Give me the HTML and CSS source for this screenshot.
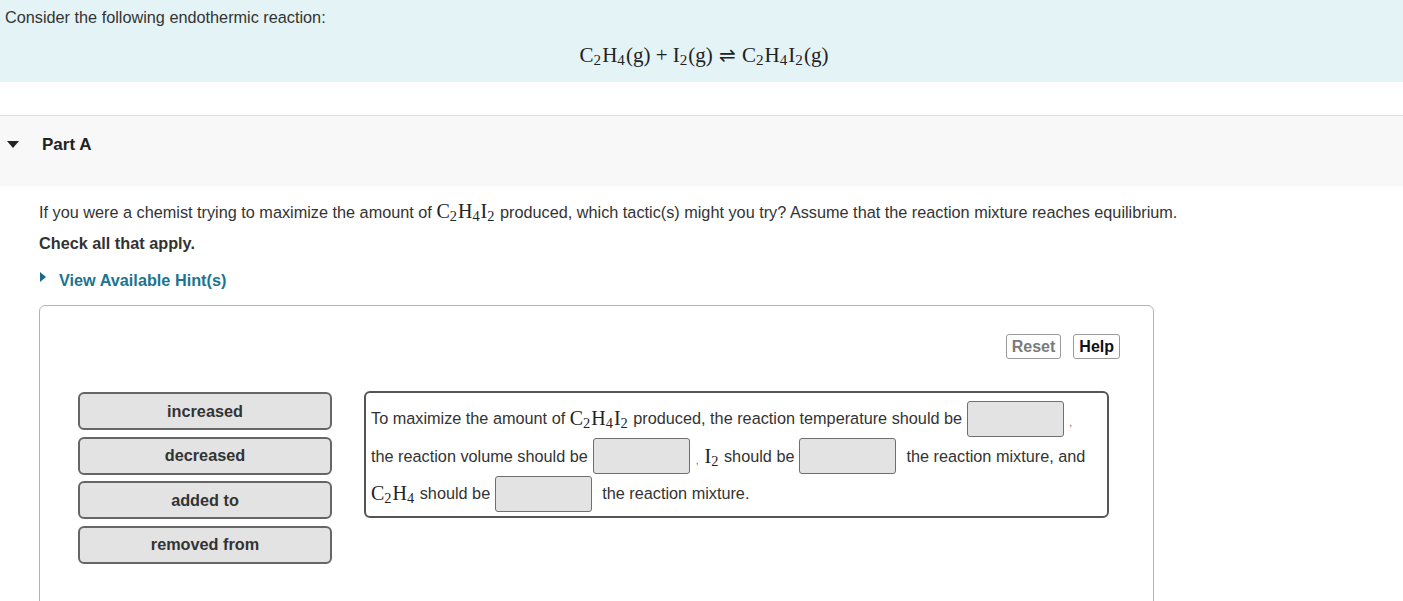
FILE: index.html
```html
<!DOCTYPE html>
<html>
<head>
<meta charset="utf-8">
<link rel="stylesheet" href="styles.css">
</head>
<body>
<div class="intro">
  <p class="intro-text">Consider the following endothermic reaction:</p>
  <div class="equation">
    <span class="chem">C<sub>2</sub>H<sub>4</sub>(g) + I<sub>2</sub>(g) <span class="harp">⇌</span> C<sub>2</sub>H<sub>4</sub>I<sub>2</sub>(g)</span>
  </div>
</div>
<div class="gap"></div>
<div class="part-header">
  <span class="tri-down"></span>
  <span class="part-title">Part A</span>
</div>
<div class="part-body">
  <p class="question">If you were a chemist trying to maximize the amount of <span class="chem">C<sub>2</sub>H<sub>4</sub>I<sub>2</sub></span> produced, which tactic(s) might you try? Assume that the reaction mixture reaches equilibrium.</p>
  <p class="check">Check all that apply.</p>
  <div class="hint"><span class="tri-right"></span><span class="hint-text">View Available Hint(s)</span></div>
  <div class="work">
    <div class="tools">
      <button class="btn btn-reset">Reset</button>
      <button class="btn btn-help">Help</button>
    </div>
    <div class="workrow">
      <div class="tiles">
        <div class="tile">increased</div>
        <div class="tile">decreased</div>
        <div class="tile">added to</div>
        <div class="tile">removed from</div>
      </div>
      <div class="sentence">
        <div class="line">
          <span>To maximize the amount of&nbsp;</span><span class="chem">C<sub>2</sub>H<sub>4</sub>I<sub>2</sub></span><span>&nbsp;produced, the reaction temperature should be</span>
          <span class="drop d1"></span><span class="comma c1">,</span>
        </div>
        <div class="line">
          <span>the reaction volume should be</span>
          <span class="drop d2"></span><span class="comma c2">,</span><span class="chem i2">I<sub>2</sub></span><span>&nbsp;should be</span>
          <span class="drop d3"></span><span class="after">the reaction mixture, and</span>
        </div>
        <div class="line">
          <span class="chem">C<sub>2</sub>H<sub>4</sub></span><span>&nbsp;should be</span>
          <span class="drop d4"></span><span class="after">the reaction mixture.</span>
        </div>
      </div>
    </div>
  </div>
</div>
</body>
</html>
```

FILE: styles.css
```css
* { box-sizing: border-box; }
html, body { margin: 0; padding: 0; background: #fff; }
body {
  font-family: "Liberation Sans", Arial, sans-serif;
  font-size: 16.25px;
  color: #333;
  overflow: hidden;
}
p { margin: 0; }

.intro {
  background: #e4f4f6;
  height: 82px;
  padding: 8px 0 0 5px;
}
.intro-text { font-size: 16.25px; line-height: 18px; }
.equation {
  text-align: center;
  margin-top: 16px;
  line-height: 26px;
}
.chem {
  font-family: "Liberation Serif", "Times New Roman", serif;
  font-size: 20px;
  color: #222;
}
.equation .chem { font-size: 21px; }
.chem sub {
  font-size: 0.72em;
  vertical-align: -0.2em;
  line-height: 0;
  padding-right: 1px;
}
.harp { font-family: "DejaVu Sans", sans-serif; font-size: 0.95em; margin: 0 1px; }

.gap { height: 33px; }

.part-header {
  border-top: 1px solid #dedede;
  background: #f8f8f8;
  height: 71px;
  display: flex;
  align-items: flex-start;
  padding-top: 19px;
}
.tri-down {
  width: 0; height: 0;
  border-left: 6px solid transparent;
  border-right: 6px solid transparent;
  border-top: 7px solid #222;
  margin: 6px 0 0 7px;
}
.part-title {
  margin-left: 23px;
  font-weight: bold;
  font-size: 17px;
  line-height: 20px;
  color: #222;
}

.part-body { padding: 14px 0 0 39px; }
.question { line-height: 22px; }
.check { font-weight: bold; margin-top: 10px; line-height: 20px; color: #333; }
.hint {
  display: flex;
  align-items: center;
  margin-top: 17px;
  height: 20px;
}
.tri-right {
  width: 0; height: 0;
  border-top: 5px solid transparent;
  border-bottom: 5px solid transparent;
  border-left: 6px solid #1a6d86;
  margin: -6px 0 0 1px;
}
.hint-text {
  margin-left: 13px;
  color: #1a7590;
  font-weight: bold;
  font-size: 16.25px;
}

.work {
  margin-top: 15px;
  width: 1115px;
  height: 320px;
  border: 1px solid #b4b4b4;
  border-radius: 6px;
  padding: 28px 33px 0 38px;
}
.tools {
  display: flex;
  justify-content: flex-end;
  gap: 12px;
}
.btn {
  font-family: "Liberation Sans", Arial, sans-serif;
  font-weight: bold;
  font-size: 16px;
  background: #fff;
  border: 1px solid #9a9a9a;
  border-radius: 3px;
  height: 25px;
  padding: 0 5px;
  line-height: 22px;
}
.btn-reset { color: #7a7a7a; }
.btn-help { color: #111; }

.workrow {
  display: flex;
  align-items: flex-start;
  gap: 32px;
  margin-top: 32px;
}
.tiles {
  display: flex;
  flex-direction: column;
  gap: 6.5px;
  width: 254px;
  margin-top: 1px;
}
.tile {
  height: 38px;
  background: #e3e3e3;
  border: 2px solid #666;
  border-radius: 6px;
  display: flex;
  align-items: center;
  justify-content: center;
  font-weight: bold;
  color: #333;
  font-size: 16.25px;
}

.sentence {
  width: 745px;
  height: 127px;
  border: 2px solid #555;
  border-radius: 6px;
  padding: 7px 0 0 5px;
  color: #333;
}
.line {
  display: flex;
  align-items: center;
  height: 37.5px;
  white-space: nowrap;
}
.drop {
  display: inline-block;
  width: 97px;
  height: 36px;
  background: #e3e3e3;
  border: 1px solid #6f6f6f;
  border-radius: 3px;
  margin-left: 5px;
}
.comma { font-size: 10px; color: #666; margin-top: 8px; }
.c1 { margin-left: 5px; }
.c2 { margin-left: 6px; margin-right: 6px; }
.after { margin-left: 10px; }
```
